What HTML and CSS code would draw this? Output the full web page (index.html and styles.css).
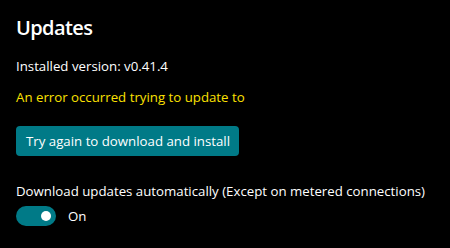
FILE: index.html
```html
<!DOCTYPE html>
<html>
<head>
<meta charset="utf-8">
<link rel="stylesheet" href="styles.css">
</head>
<body>
<div class="page">
  <h1 class="title">Updates</h1>
  <div class="version">Installed version: v0.41.4</div>
  <div class="error">An error occurred trying to update to</div>
  <button class="btn">Try again to download and install</button>
  <div class="auto-label">Download updates automatically (Except on metered connections)</div>
  <div class="toggle-row">
    <span class="toggle"><span class="knob"></span></span>
    <span class="toggle-text">On</span>
  </div>
</div>
</body>
</html>
```
FILE: styles.css
```css
html, body {
  margin: 0;
  padding: 0;
  background: #000;
}
.page {
  padding: 14px 16px 0 16px;
  font-family: "Open Sans", "Noto Sans", sans-serif;
  color: #fff;
  font-size: 13.25px;
  display: flex;
  flex-direction: column;
  align-items: flex-start;
}
.title {
  margin: 0;
  font-size: 20px;
  font-weight: 600;
  letter-spacing: -0.6px;
  line-height: 28px;
}
.version {
  margin-top: 15px;
  line-height: 18px;
}
.error {
  margin-top: 13px;
  line-height: 18px;
  color: #fce100;
}
.btn {
  margin-top: 20px;
  height: 30px;
  padding: 0 9px 0 10px;
  border: none;
  border-radius: 4px;
  background: #007a87;
  color: #fff;
  font-family: inherit;
  font-size: 13.25px;
}
.auto-label {
  margin-top: 26px;
  line-height: 18px;
}
.toggle-row {
  margin-top: 6px;
  display: flex;
  align-items: center;
  gap: 12px;
}
.toggle {
  width: 40px;
  height: 20px;
  border-radius: 10px;
  background: #007a87;
  display: flex;
  align-items: center;
  justify-content: flex-end;
  padding-right: 5px;
  box-sizing: border-box;
}
.knob {
  width: 10px;
  height: 10px;
  border-radius: 50%;
  background: #fff;
}
.toggle-text {
  line-height: 18px;
}
```
